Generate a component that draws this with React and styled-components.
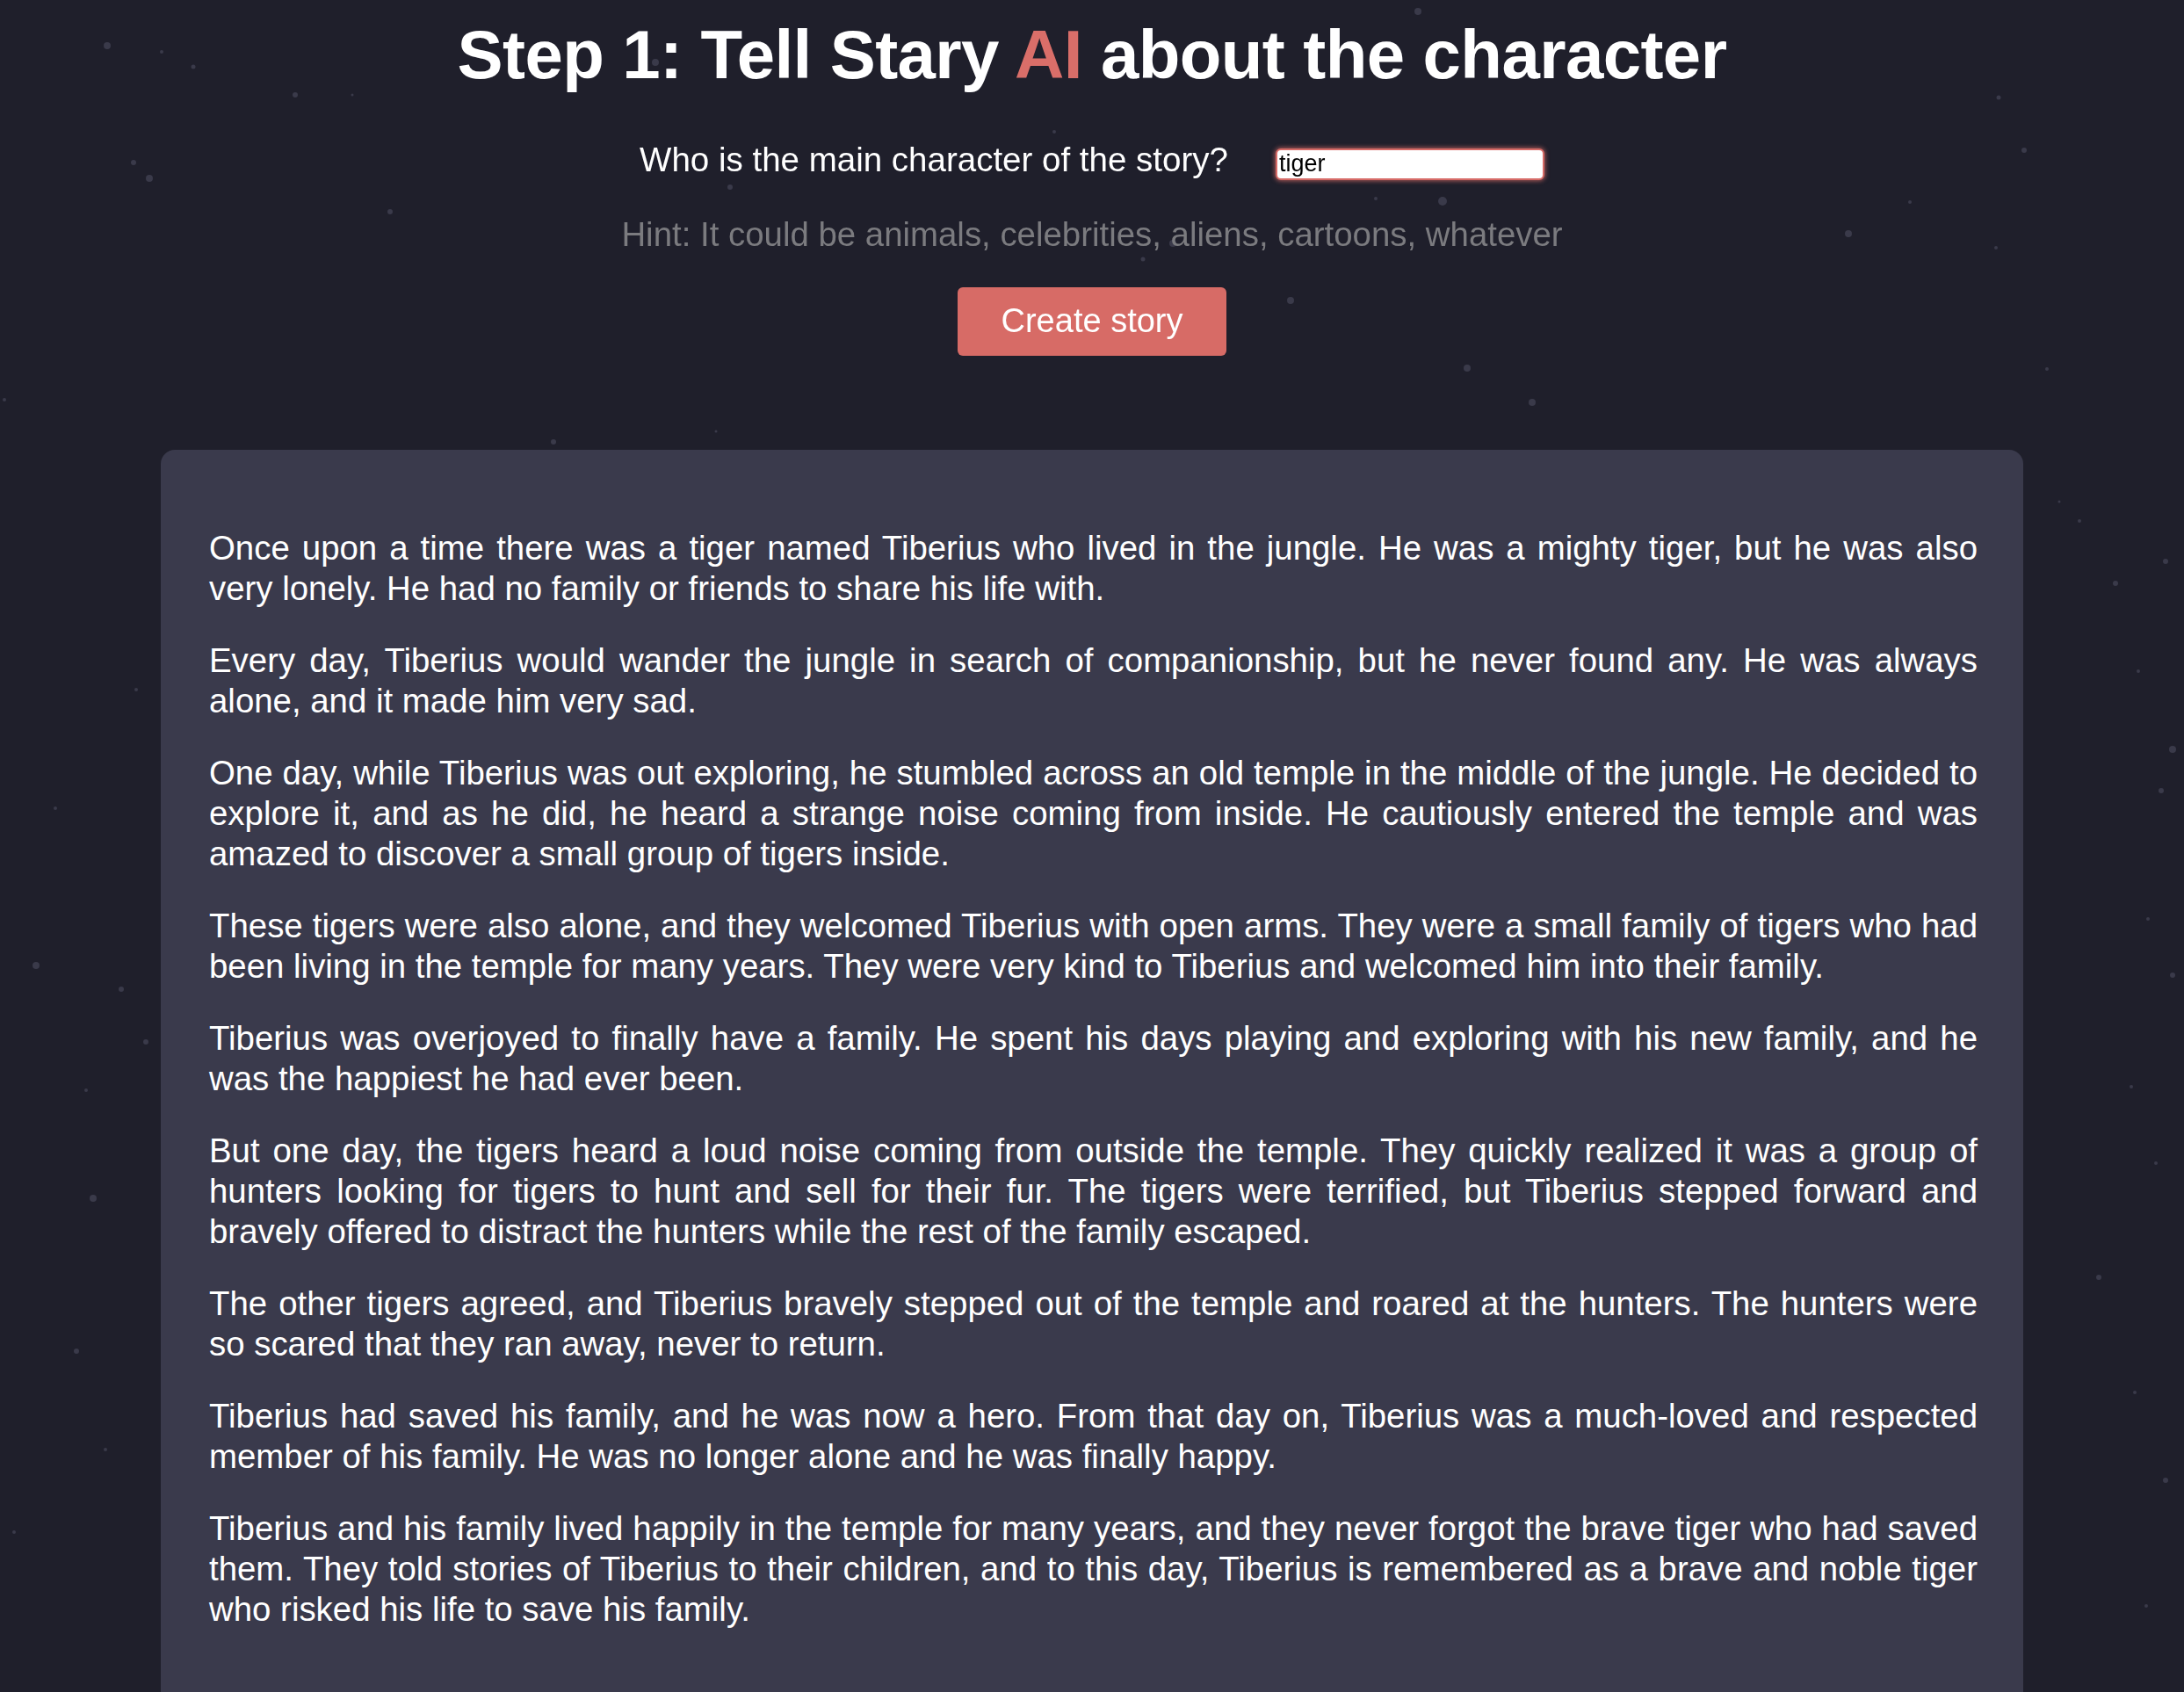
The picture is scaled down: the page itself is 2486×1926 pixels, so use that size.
import React, { useState } from 'react';
import styled, { createGlobalStyle } from 'styled-components';

const GlobalStyle = createGlobalStyle`
  html, body {
    margin: 0;
    padding: 0;
    background: #1f1f2b;
    overflow: hidden;
    font-family: "Liberation Sans", Helvetica, Arial, sans-serif;
  }
`;

const StyledPage = styled.main`
  position: relative;
  min-height: 100vh;
  padding-top: 17px;
`;

const StyledStarField = styled.svg`
  position: fixed;
  inset: 0;
  width: 100%;
  height: 100%;
  pointer-events: none;
  z-index: 0;
`;

const StyledContent = styled.div`
  position: relative;
  z-index: 1;
  display: flex;
  flex-direction: column;
  align-items: center;
`;

const StyledTitle = styled.h1`
  margin: 0;
  color: #ffffff;
  font-size: 78px;
  font-weight: 700;
  letter-spacing: -0.6px;
  text-align: center;
`;

const StyledAccent = styled.span`
  color: #d96e69;
`;

const StyledQuestionRow = styled.label`
  display: flex;
  align-items: baseline;
  justify-content: center;
  gap: 54px;
  margin-top: 52px;
  color: #ffffff;
  font-size: 38.5px;
`;

const StyledInput = styled.input`
  box-sizing: border-box;
  width: 306px;
  height: 36px;
  padding: 0 2px;
  border: 2px solid #d66b67;
  border-radius: 6px;
  background: #ffffff;
  box-shadow: 0 0 5px 1px rgba(214, 107, 103, 0.75);
  color: #000000;
  font-family: inherit;
  font-size: 27px;
  outline: none;
`;

const StyledHint = styled.p`
  margin: 40px 0 0;
  color: #7b7b7f;
  font-size: 38.4px;
`;

const StyledButton = styled.button`
  box-sizing: border-box;
  height: 78px;
  margin-top: 38px;
  padding: 0 50px;
  border: none;
  border-radius: 6px;
  background: #d76b66;
  color: #ffffff;
  font-family: inherit;
  font-size: 38px;
  cursor: pointer;
`;

const StyledStoryCard = styled.section`
  position: relative;
  z-index: 1;
  margin: 107px 183px 0;
  padding: 53px 52px 53px 55px;
  border-radius: 16px;
  background: #3a3a4c;
`;

const StyledParagraph = styled.p`
  margin: 36px 0;
  color: #ffffff;
  font-size: 38.4px;
  line-height: 46px;
  text-align: justify;
`;

const stars = [
  [122, 52, 4], [184, 59, 2], [220, 76, 2.5], [336, 108, 3], [401, 108, 1.5],
  [152, 185, 3], [170, 203, 4], [444, 241, 3], [1614, 13, 4], [2275, 111, 2.5],
  [2304, 171, 3], [2174, 230, 2], [2104, 266, 4], [2272, 282, 2], [1469, 342, 4],
  [1670, 419, 4], [1744, 458, 4], [815, 491, 1.5], [5, 455, 2], [746, 71, 4],
  [831, 213, 3], [1301, 295, 2.5], [1335, 277, 4], [1566, 226, 2], [1642, 229, 5],
  [630, 503, 3], [2344, 571, 1.5], [2367, 593, 2], [2465, 639, 3], [2408, 664, 3],
  [2473, 853, 4], [2460, 900, 3], [2434, 764, 2], [2473, 1110, 3], [2445, 1046, 2],
  [2426, 1237, 2], [2454, 1324, 2], [2389, 1454, 3], [2430, 1585, 2], [2465, 1685, 3],
  [2443, 1828, 2], [41, 1099, 4], [138, 1126, 3], [166, 1186, 3], [98, 1241, 2],
  [106, 1364, 4], [87, 1538, 3], [155, 785, 2], [63, 920, 2], [16, 1744, 2],
  [120, 1650, 2], [2330, 420, 2], [1930, 60, 2], [1200, 150, 2], [960, 40, 1.5]
];

const StarField = () => (
  <StyledStarField>
    {stars.map(([x, y, r], i) => (
      <circle key={i} cx={x} cy={y} r={r} fill="#3a3a4a" />
    ))}
  </StyledStarField>
);

const story = [
  'Once upon a time there was a tiger named Tiberius who lived in the jungle. He was a mighty tiger, but he was also very lonely. He had no family or friends to share his life with.',
  'Every day, Tiberius would wander the jungle in search of companionship, but he never found any. He was always alone, and it made him very sad.',
  'One day, while Tiberius was out exploring, he stumbled across an old temple in the middle of the jungle. He decided to explore it, and as he did, he heard a strange noise coming from inside. He cautiously entered the temple and was amazed to discover a small group of tigers inside.',
  'These tigers were also alone, and they welcomed Tiberius with open arms. They were a small family of tigers who had been living in the temple for many years. They were very kind to Tiberius and welcomed him into their family.',
  'Tiberius was overjoyed to finally have a family. He spent his days playing and exploring with his new family, and he was the happiest he had ever been.',
  'But one day, the tigers heard a loud noise coming from outside the temple. They quickly realized it was a group of hunters looking for tigers to hunt and sell for their fur. The tigers were terrified, but Tiberius stepped forward and bravely offered to distract the hunters while the rest of the family escaped.',
  'The other tigers agreed, and Tiberius bravely stepped out of the temple and roared at the hunters. The hunters were so scared that they ran away, never to return.',
  'Tiberius had saved his family, and he was now a hero. From that day on, Tiberius was a much-loved and respected member of his family. He was no longer alone and he was finally happy.',
  'Tiberius and his family lived happily in the temple for many years, and they never forgot the brave tiger who had saved them. They told stories of Tiberius to their children, and to this day, Tiberius is remembered as a brave and noble tiger who risked his life to save his family.'
];

const App = () => {
  const [character, setCharacter] = useState('tiger');

  return (
    <StyledPage>
      <GlobalStyle />
      <StarField />
      <StyledContent>
        <StyledTitle>
          Step 1: Tell Stary <StyledAccent>AI</StyledAccent> about the character
        </StyledTitle>
        <StyledQuestionRow>
          <span>Who is the main character of the story?</span>
          <StyledInput
            value={character}
            onChange={(e) => setCharacter(e.target.value)}
          />
        </StyledQuestionRow>
        <StyledHint>
          Hint: It could be animals, celebrities, aliens, cartoons, whatever
        </StyledHint>
        <StyledButton>Create story</StyledButton>
      </StyledContent>
      <StyledStoryCard>
        {story.map((text, i) => (
          <StyledParagraph key={i}>{text}</StyledParagraph>
        ))}
      </StyledStoryCard>
    </StyledPage>
  );
};

export default App;
